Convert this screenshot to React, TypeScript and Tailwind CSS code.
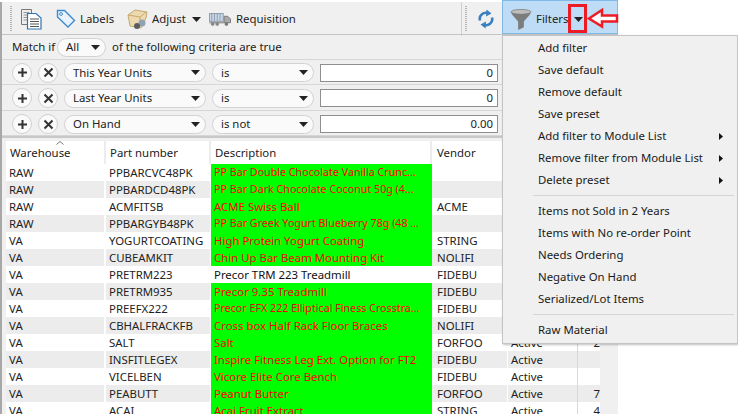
const font = { fontFamily: '"Noto Sans", sans-serif' };

type Row = { w: string; p: string; d: string; v: string; s?: string; n?: string; plain?: boolean; tight?: boolean };
const rows: Row[] = [
  { w: "RAW", p: "PPBARCVC48PK", d: "PP Bar Double Chocolate Vanilla Crunc...", v: "", tight: true },
  { w: "RAW", p: "PPBARDCD48PK", d: "PP Bar Dark Chocolate Coconut 50g (4...", v: "", tight: true },
  { w: "RAW", p: "ACMFITSB", d: "ACME Swiss Ball", v: "ACME" },
  { w: "RAW", p: "PPBARGYB48PK", d: "PP Bar Greek Yogurt Blueberry 78g (48 ...", v: "", tight: true },
  { w: "VA", p: "YOGURTCOATING", d: "High Protein Yogurt Coating", v: "STRING" },
  { w: "VA", p: "CUBEAMKIT", d: "Chin Up Bar Beam Mounting Kit", v: "NOLIFI" },
  { w: "VA", p: "PRETRM223", d: "Precor TRM 223 Treadmill", v: "FIDEBU", plain: true },
  { w: "VA", p: "PRETRM935", d: "Precor 9.35 Treadmill", v: "FIDEBU" },
  { w: "VA", p: "PREEFX222", d: "Precor EFX 222 Elliptical Finess Crosstra...", v: "FIDEBU", tight: true },
  { w: "VA", p: "CBHALFRACKFB", d: "Cross box Half Rack Floor Braces", v: "NOLIFI" },
  { w: "VA", p: "SALT", d: "Salt", v: "FORFOO", s: "Active", n: "2" },
  { w: "VA", p: "INSFITLEGEX", d: "Inspire Fitness Leg Ext. Option for FT2", v: "FIDEBU", s: "Active" },
  { w: "VA", p: "VICELBEN", d: "Vicore Elite Core Bench", v: "FIDEBU", s: "Active" },
  { w: "VA", p: "PEABUTT", d: "Peanut Butter", v: "FORFOO", s: "Active", n: "7" },
  { w: "VA", p: "ACAI", d: "Acai Fruit Extract", v: "STRING", s: "Active", n: "4" },
];

function Caret() {
  return <svg width="9" height="5" viewBox="0 0 9 5" className="shrink-0"><path d="M0 0h9L4.5 5z" fill="#222" /></svg>;
}

function Pill({ label, w }: { label: string; w: string }) {
  return (
    <div className={`${w} h-[19px] shrink-0 flex items-center justify-between rounded-full border border-[#d2d2d2] bg-[#fafafa] pl-2 pr-[5px] text-[11.4px] text-[#222]`}>
      <span>{label}</span>
      <Caret />
    </div>
  );
}

function RoundBtn({ kind }: { kind: "plus" | "x" }) {
  return (
    <div className="w-[20px] h-[20px] shrink-0 rounded-full border border-[#d0d0d0] bg-[#fafafa] flex items-center justify-center">
      <svg width="11" height="11" viewBox="0 0 11 11" stroke="#333" strokeWidth="2">
        {kind === "plus" ? <path d="M5.5 1v9M1 5.5h9" /> : <path d="M1.5 1.5l8 8M9.5 1.5l-8 8" />}
      </svg>
    </div>
  );
}

function FilterRow({ a, b, v, cls }: { a: string; b: string; v: string; cls: string }) {
  return (
    <div className={`${cls} shrink-0 flex items-center border-b border-[#d6d6d6] pl-[10px]`}>
      <RoundBtn kind="plus" />
      <div className="w-[6px]" />
      <RoundBtn kind="x" />
      <div className="w-[6px]" />
      <Pill label={a} w="w-[142px]" />
      <div className="w-[6px]" />
      <Pill label={b} w="w-[102px]" />
      <div className="w-[6px]" />
      <div className="w-[178px] h-[18px] shrink-0 border border-[#8e8e8e] bg-white text-right pr-[4px] text-[11.4px] leading-[16px] text-[#222]">{v}</div>
    </div>
  );
}

function Gripper() {
  return (
    <div className="w-[2px] h-[26px] shrink-0 flex flex-col gap-[1px] overflow-hidden">
      {Array.from({ length: 13 }).map((_, i) => <div key={i} className="w-[2px] h-[1px] bg-[#b4b4b4]" />)}
    </div>
  );
}

function DocIcon() {
  return (
    <svg width="22" height="22" viewBox="0 0 22 22" className="shrink-0">
      <path d="M1.500 1.500h10v15h-10z" fill="#eee" stroke="#777" />
      <path d="M3.500 4.500h6M3.500 7h6M3.500 9.500h6M3.500 12h6" stroke="#999" />
      <path d="M7.500 5.500h8.500l5 4.500v11h-13.500z" fill="#fff" stroke="#2f74b5" strokeWidth="1.2" />
      <path d="M10 11h9M10 13.500h9M10 16h9M10 18.500h9" stroke="#555" />
    </svg>
  );
}
function TagIcon() {
  return (
    <svg width="20" height="20" viewBox="0 0 20 20" className="shrink-0">
      <path d="M1.500 1.500h7l10 10-6.500 6.500-10.500-10z" fill="#eaf3fb" stroke="#3d8ad0" strokeWidth="1.4" />
      <circle cx="5" cy="5" r="1.400" fill="#fff" stroke="#3d8ad0" />
    </svg>
  );
}
function BoxIcon() {
  return (
    <svg width="22" height="22" viewBox="0 0 22 22" className="shrink-0">
      <path d="M1 7l7-5 12 2-1 6-5 10-11-2z" fill="#ecd9b0" stroke="#c4a873" />
      <path d="M1 7l12 2 6-5M13 9v10" stroke="#caa96e" fill="none" />
      <circle cx="15" cy="15" r="3.500" fill="#8fa3b5" />
      <circle cx="10" cy="18" r="3" fill="#5c5c5c" />
    </svg>
  );
}
function TruckIcon() {
  return (
    <svg width="22" height="15" viewBox="0 0 24 15" className="shrink-0">
      <rect x="0.500" y="1" width="15" height="8.500" fill="#c9d8e8" stroke="#8b99a8" />
      <path d="M3 1v8M6 1v8M9 1v8M12 1v8" stroke="#8b99a8" />
      <path d="M16.500 4h4l3 3v4h-7z" fill="#a9a9a9" stroke="#777" />
      <path d="M0.500 11h16" stroke="#999" strokeWidth="1.500" />
      <circle cx="4" cy="12.500" r="2" fill="#888" /><circle cx="9" cy="12.500" r="2" fill="#888" /><circle cx="19" cy="12.500" r="2" fill="#777" />
    </svg>
  );
}
function SyncIcon() {
  return (
    <svg width="16" height="20" viewBox="0 0 16 20" fill="none" className="shrink-0">
      <path d="M2 11.500A6 6 0 0 1 10.500 4.500" stroke="#3a80c0" strokeWidth="2.600" />
      <path d="M8.500 0.500l5 4-5.500 3z" fill="#3a80c0" />
      <path d="M14 8.500A6 6 0 0 1 5.500 15.500" stroke="#3a80c0" strokeWidth="2.600" />
      <path d="M7.500 19.500l-5-4 5.500-3z" fill="#3a80c0" />
    </svg>
  );
}
function FunnelIcon() {
  return (
    <svg width="22" height="21" viewBox="0 0 22 22" className="shrink-0">
      <ellipse cx="11" cy="3" rx="10.500" ry="2.500" fill="#bdbdbd" stroke="#8a8a8a" />
      <path d="M0.500 3.500c2 5 7 8 7.500 10v8.500l6-3v-5.500c.5-2 5.500-5 7.500-10-3 2.500-18 2.500-21 0z" fill="#7c7c7c" />
    </svg>
  );
}

function Cell({ w, children, cls = "" }: { w: string; children?: React.ReactNode; cls?: string }) {
  return <div className={`${w} h-full shrink-0 overflow-hidden whitespace-nowrap ${cls}`}>{children}</div>;
}

function MenuItem({ label, arrow }: { label: string; arrow?: boolean }) {
  return (
    <div className="h-[22px] flex items-center justify-between pl-[35px] pr-[14px] text-[11.4px] text-[#1a1a1a]">
      <span>{label}</span>
      {arrow && <svg width="4" height="7" viewBox="0 0 4 7"><path d="M0 0l4 3.500-4 3.500z" fill="#111" /></svg>}
    </div>
  );
}

export default function App() {
  return (
    <div className="relative w-[738px] h-[414px] overflow-hidden bg-white" style={font}>
      <div className="w-[618px] h-[414px] flex flex-col pt-[2px]">
        <div className="h-[412px] flex flex-col bg-[#f0f0f0] border-l-2 border-[#a8a8a8]">
          {/* toolbar */}
          <div className="h-[33px] shrink-0 flex items-center pt-[2px] border-b border-[#c4c4c4] text-[11.4px] text-[#222]">
            <div className="w-[8px]" />
            <Gripper />
            <div className="w-[8px]" />
            <DocIcon />
            <div className="w-[14px]" />
            <TagIcon />
            <span className="ml-[4px] w-[47px]">Labels</span>
            <BoxIcon />
            <span className="ml-[3px] w-[40px]">Adjust</span>
            <Caret />
            <div className="w-[8px]" />
            <TruckIcon />
            <span className="ml-[5px] w-[225px]">Requisition</span>
            <div className="w-[1px] h-[34px] bg-[#cfcfcf]" />
            <div className="w-[3px]" />
            <Gripper />
            <div className="w-[11px]" />
            <SyncIcon />
            <div className="w-[8px]" />
            <div className="w-[116px] h-[34px] -mt-[4px] self-start shrink-0 flex items-center bg-[#bedcf5] border border-[#7fb9e6] pl-[7px] pt-[4px]">
              <FunnelIcon />
              <span className="ml-[4px] w-[38px] text-[#222]">Filters</span>
              <Caret />
            </div>
          </div>
          {/* match row */}
          <div className="h-[25px] shrink-0 flex items-center border-b border-[#d6d6d6] pl-[10px] text-[11.4px] text-[#222]">
            <span className="w-[45px]">Match if</span>
            <Pill label="All" w="w-[49px]" />
            <span className="ml-[6px]">of the following criteria are true</span>
          </div>
          <FilterRow a="This Year Units" b="is" v="0" cls="h-[25px] pt-[1px]" />
          <FilterRow a="Last Year Units" b="is" v="0" cls="h-[26px] pt-[1px]" />
          <FilterRow a="On Hand" b="is not" v="0.00" cls="h-[25px] pt-[2px]" />
          <div className="h-[2px] shrink-0 bg-[#c8c8c8]" />
          {/* table */}
          <div className="flex flex-1 min-h-0 pt-[3px] pl-[4px]">
            <div className="w-[594px] flex flex-col shrink-0 text-[11.4px] text-[#222]">
              <div className="h-[23px] shrink-0 flex bg-white leading-[24px]">
                <Cell w="w-[100px]" cls="relative pl-[4px] border-r-2 border-[#ececec]">
                  <span>Warehouse</span>
                  <svg width="8" height="4" viewBox="0 0 8 4" className="absolute left-[50px] top-0" fill="none"><path d="M0.500 3.500L4 0.500l3.500 3" stroke="#777" /></svg>
                </Cell>
                <Cell w="w-[105px]" cls="pl-[4px] border-r-2 border-[#ececec]">Part number</Cell>
                <Cell w="w-[221px]" cls="pl-[4px] border-r-2 border-[#ececec]">Description</Cell>
                <Cell w="w-[76px]" cls="pl-[5px] border-r-2 border-[#ececec]">Vendor</Cell>
                <Cell w="w-[70px]" cls="border-r-2 border-[#ececec]" />
                <Cell w="w-[22px]" />
              </div>
              {rows.map((r, i) => (
                <div key={r.p} className={`h-[17px] shrink-0 flex leading-[17px] ${i % 2 === 1 ? "bg-[#ececec]" : "bg-white"}`}>
                  <Cell w="w-[100px]" cls="pl-[3px] border-r-2 border-[#fff]">{r.w}</Cell>
                  <Cell w="w-[105px]" cls="pl-[3px] border-r-1 border-[#fff]">{r.p}</Cell>
                  <Cell w="w-[221px]" cls={`pl-[3px] ${r.plain ? "bg-white text-[#111]" : "bg-[#00ff00] text-[#ff0000]"} ${r.tight ? "text-[10.7px]" : ""}`}>{r.d}</Cell>
                  <Cell w="w-[76px]" cls="pl-[5px] border-r-1 border-[#fff]">{r.v}</Cell>
                  <Cell w="w-[70px]" cls="pl-[3px] border-r-1 border-[#d8d8d8]">{r.s}</Cell>
                  <Cell w="w-[22px]" cls="text-right">{r.n}</Cell>
                </div>
              ))}
            </div>
          </div>
        </div>
      </div>

      {/* red annotation */}
      <div className="absolute left-[568px] top-[4px] w-[19px] h-[29px] border-[3px] border-[#ed1c24]" />
      <svg className="absolute left-[587px] top-[8px]" width="32" height="21" viewBox="0 0 32 21" fill="none">
        <path d="M2 10.500L15 2v5.500h15v6H15v5z" stroke="#ed1c24" strokeWidth="2.500" fill="#fff" />
      </svg>

      {/* dropdown menu */}
      <div className="absolute left-[502px] top-[35px] w-[236px] h-[309px] bg-[#f0f0f0] border border-[#c4c4c4] shadow-[1px_1px_2px_rgba(0,0,0,0.25)] pt-[1px]">
        <MenuItem label="Add filter" />
        <MenuItem label="Save default" />
        <MenuItem label="Remove default" />
        <MenuItem label="Save preset" />
        <MenuItem label="Add filter to Module List" arrow />
        <MenuItem label="Remove filter from Module List" arrow />
        <MenuItem label="Delete preset" arrow />
        <div className="h-[9px] flex items-center pl-[30px] pr-[3px]"><div className="w-full h-[1px] bg-[#d4d4d4]" /></div>
        <MenuItem label="Items not Sold in 2 Years" />
        <MenuItem label="Items with No re-order Point" />
        <MenuItem label="Needs Ordering" />
        <MenuItem label="Negative On Hand" />
        <MenuItem label="Serialized/Lot Items" />
        <div className="h-[9px] flex items-center pl-[30px] pr-[3px]"><div className="w-full h-[1px] bg-[#d4d4d4]" /></div>
        <MenuItem label="Raw Material" />
      </div>
    </div>
  );
}
